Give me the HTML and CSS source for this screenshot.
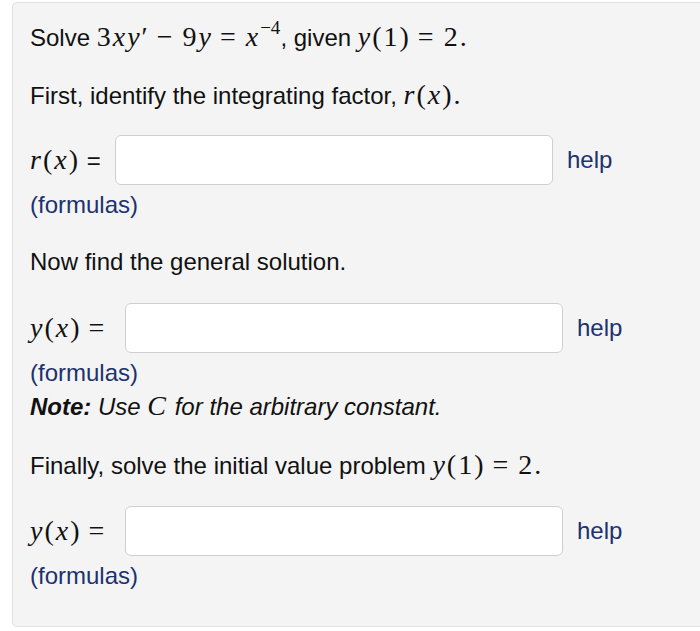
FILE: index.html
```html
<!DOCTYPE html>
<html>
<head>
<meta charset="utf-8">
<link rel="stylesheet" href="styles.css">
</head>
<body>
<div class="panel">
  <p class="line first">Solve <span class="m"><span class="mn">3</span><span class="mi">xy</span>′<span class="op">−</span><span class="mn">9</span><span class="mi">y</span><span class="op">=</span><span class="mi">x</span><sup class="sup">−4</sup></span>, given <span class="m"><span class="mi">y</span>(<span class="mn">1</span>)<span class="op">=</span><span class="mn">2</span>.</span></p>
  <p class="line p2">First, identify the integrating factor, <span class="m"><span class="mi">r</span>(<span class="mi">x</span>).</span></p>

  <div class="row r1">
    <span class="label"><span class="m"><span class="mi">r</span>(<span class="mi">x</span>)</span> =</span>
    <span class="box"></span>
    <a class="help">help</a>
  </div>
  <a class="formulas">(formulas)</a>

  <p class="line p3">Now find the general solution.</p>
  <div class="row r2">
    <span class="label"><span class="m"><span class="mi">y</span>(<span class="mi">x</span>)<span class="op">=</span></span></span>
    <span class="box"></span>
    <a class="help">help</a>
  </div>
  <a class="formulas">(formulas)</a>
  <p class="line note"><b>Note:</b> Use <span class="m"><span class="mi">C</span></span> for the arbitrary constant.</p>

  <p class="line p4">Finally, solve the initial value problem <span class="m"><span class="mi">y</span>(<span class="mn">1</span>)<span class="op">=</span><span class="mn">2</span>.</span></p>
  <div class="row r3">
    <span class="label"><span class="m"><span class="mi">y</span>(<span class="mi">x</span>)<span class="op">=</span></span></span>
    <span class="box"></span>
    <a class="help">help</a>
  </div>
  <a class="formulas">(formulas)</a>
</div>
</body>
</html>
```

FILE: styles.css
```css
html, body {
  margin: 0;
  padding: 0;
  background: #ffffff;
}
body {
  width: 700px;
  height: 631px;
  overflow: hidden;
  font-family: "Liberation Sans", Arial, sans-serif;
  font-size: 24px;
  color: #111111;
}
.panel {
  margin: 2px 0 0 12px;
  width: 720px;
  height: 625px;
  box-sizing: border-box;
  border: 1px solid #e0e0e0;
  border-radius: 5px;
  background: #f4f4f4;
  padding: 19px 0 0 17px;
}
.line {
  margin: 0;
  line-height: 30px;
  height: 30px;
  white-space: nowrap;
}
.p2 { margin-top: 28px; }
.p3 { margin-top: 27px; }
.note { margin-top: 3px; font-style: italic; }
.note b { font-style: italic; }
.p4 { margin-top: 29px; }

.m {
  font-family: "Liberation Serif", "Times New Roman", serif;
  font-size: 28px;
  letter-spacing: 2px;
}
.mi { font-style: italic; }
.mn { font-style: normal; }
.op { margin: 0 8px 0 7px; }
.sup { font-size: 19px; vertical-align: 12px; line-height: 0; letter-spacing: 0; }

.row {
  display: flex;
  align-items: center;
  height: 50px;
}
.r1 { margin-top: 25px; }
.r2 { margin-top: 26px; }
.r3 { margin-top: 26px; }
.label {
  white-space: nowrap;
  margin-right: 12px;
}
.r1 .label { width: 73px; }
.r2 .label, .r3 .label { width: 83px; }
.box {
  display: block;
  width: 438px;
  height: 50px;
  box-sizing: border-box;
  background: #ffffff;
  border: 1px solid #cfcfcf;
  border-radius: 6px;
}
.help {
  margin-left: 14px;
  color: #1d326e;
  text-decoration: none;
}
.formulas {
  display: block;
  margin-top: 5px;
  line-height: 30px;
  height: 30px;
  color: #1d326e;
  text-decoration: none;
}
```
